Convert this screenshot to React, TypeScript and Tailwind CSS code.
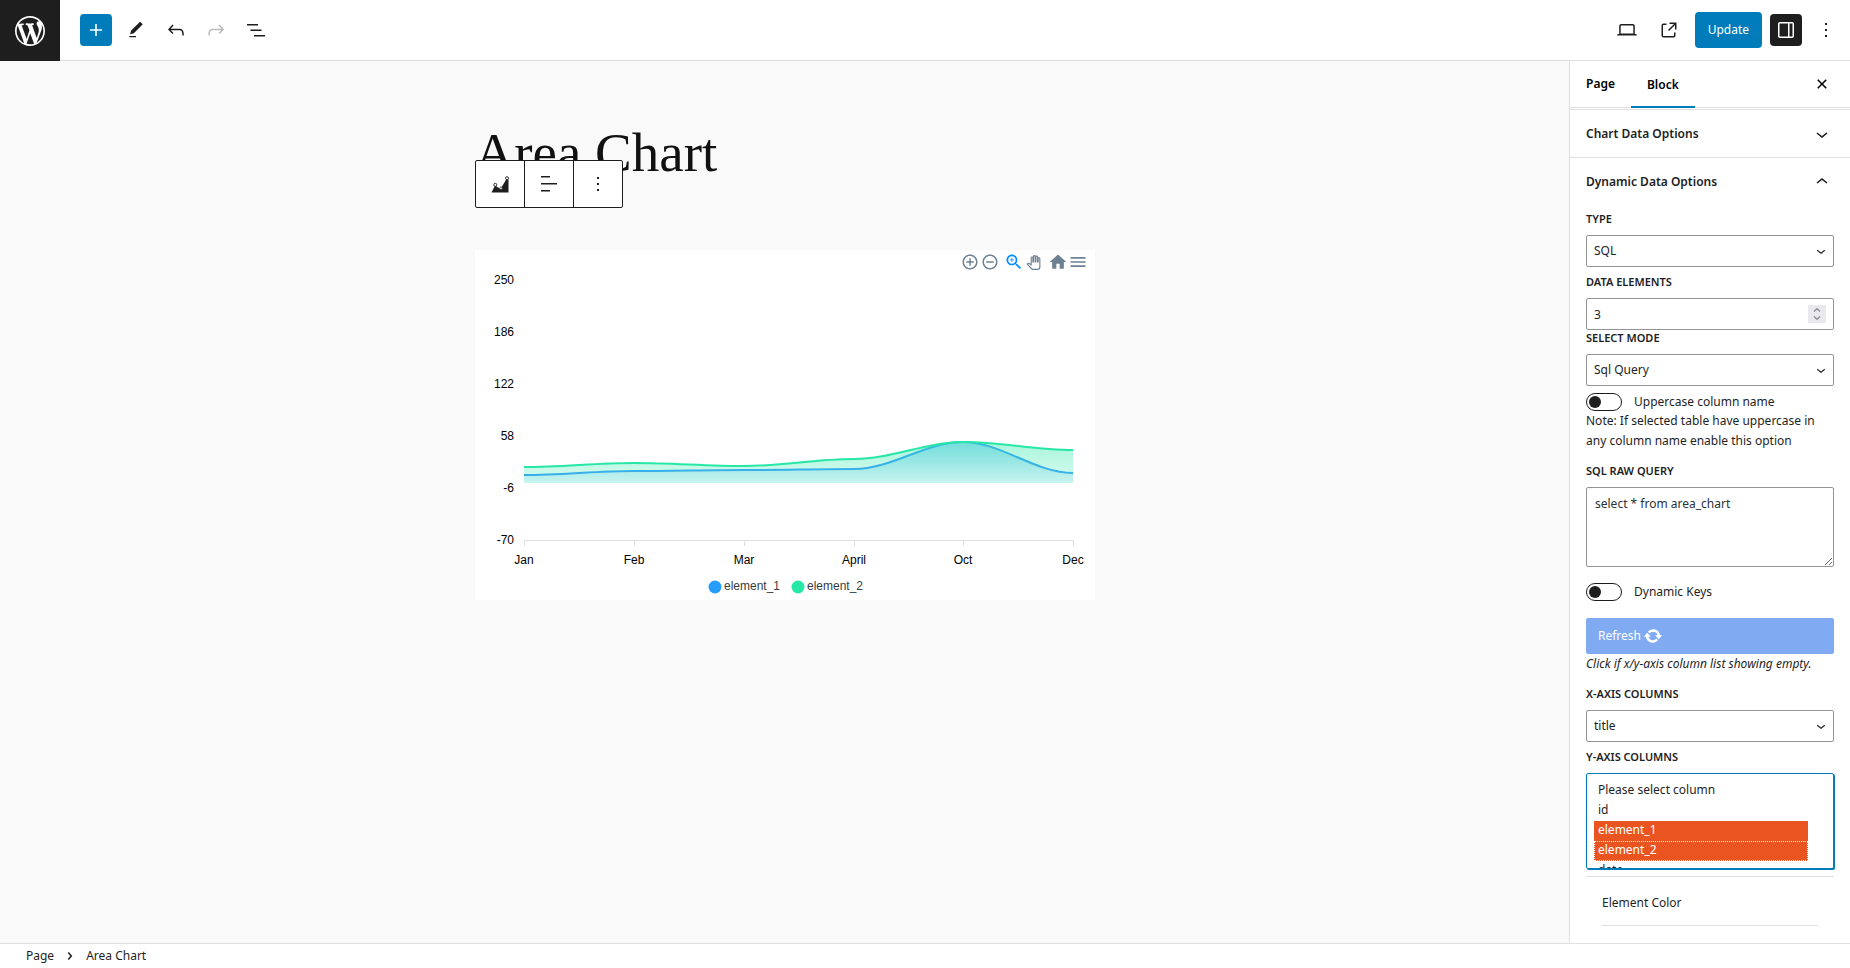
import type { ReactNode, SelectHTMLAttributes } from 'react'

const paths = {
  wordpress:
    'M20 10c0-5.51-4.49-10-10-10C4.48 0 0 4.49 0 10c0 5.52 4.48 10 10 10 5.51 0 10-4.48 10-10zM7.78 15.37L4.37 6.22c.55-.02 1.17-.08 1.17-.08.5-.06.44-1.13-.06-1.11 0 0-1.45.11-2.37.11-.18 0-.37 0-.58-.01C4.12 2.69 6.87 1.11 10 1.11c2.33 0 4.45.87 6.05 2.34-.68-.11-1.65.39-1.65 1.58 0 .74.45 1.36.9 2.1.35.61.55 1.36.55 2.46 0 1.49-1.4 5-1.4 5l-3.03-8.37c.54-.02.82-.17.82-.17.5-.05.44-1.25-.06-1.22 0 0-1.44.12-2.38.12-.87 0-2.33-.12-2.33-.12-.5-.03-.56 1.2-.06 1.22l.92.08 1.26 3.41zM17.41 10c.24-.64.74-1.87.43-4.25.7 1.29 1.05 2.71 1.05 4.25 0 3.29-1.73 6.24-4.4 7.78.97-2.59 1.94-5.2 2.92-7.78zM6.1 18.09C3.12 16.65 1.11 13.53 1.11 10c0-1.3.23-2.48.72-3.59C3.25 10.3 4.67 14.2 6.1 18.09zm4.03-6.63l2.58 6.98c-.86.29-1.76.45-2.71.45-.79 0-1.57-.11-2.29-.33.81-2.38 1.62-4.74 2.42-7.1z',
  plus: 'M18 11.2h-5.2V6h-1.6v5.2H6v1.6h5.2V18h1.6v-5.2H18z',
  edit: 'M20.1 5.1L16.9 2 6.2 12.7l-1.3 4.4 4.5-1.3L20.1 5.1zM4 20.8h8v-1.5H4v1.5z',
  undo: 'M18.3 11.7c-.6-.6-1.4-.9-2.3-.9H6.7l2.9-3.3-1.1-1-4.5 5L8.5 16l1-1-2.7-2.7H16c.5 0 .9.2 1.3.5 1 1 1 3.4 1 4.5v.3h1.5v-.2c0-1.5 0-4.3-1.5-5.7z',
  redo: 'M15.6 6.5l-1.1 1 2.9 3.3H8c-.9 0-1.7.3-2.3.9-1.4 1.5-1.4 4.2-1.4 5.6v.2h1.5v-.3c0-1.1 0-3.5 1-4.5.3-.3.7-.5 1.3-.5h9.2L14.5 15l1.1 1.1 4.6-4.6-4.6-5z',
  listView: 'M3 6h11v1.5H3V6Zm3.5 5.5h11V13h-11v-1.5ZM21 17H10v1.5h11V17Z',
  desktop:
    'M20.5 16h-.7V8c0-1.1-.9-2-2-2H6.2c-1.1 0-2 .9-2 2v8h-.7c-.8 0-1.5.7-1.5 1.5h20c0-.8-.7-1.5-1.5-1.5zM5.7 8c0-.3.2-.5.5-.5h11.6c.3 0 .5.2.5.5v7.6H5.7V8z',
  external:
    'M19.5 4.5h-7V6h4.44l-5.97 5.97 1.06 1.06L18 7.06v4.44h1.5v-7Zm-13 1a2 2 0 0 0-2 2v10a2 2 0 0 0 2 2h10a2 2 0 0 0 2-2v-3H17v3a.5.5 0 0 1-.5.5h-10a.5.5 0 0 1-.5-.5v-10a.5.5 0 0 1 .5-.5h3V5.5h-3Z',
  drawer:
    'M18 4H6c-1.1 0-2 .9-2 2v12c0 1.1.9 2 2 2h12c1.1 0 2-.9 2-2V6c0-1.1-.9-2-2-2zm-4 14.5H6c-.3 0-.5-.2-.5-.5V6c0-.3.2-.5.5-.5h8v13zm4.5-.5c0 .3-.2.5-.5.5h-2.5v-13H18c.3 0 .5.2.5.5v12z',
  more: 'M13 19h-2v-2h2v2zm0-6h-2v-2h2v2zm0-6h-2V5h2v2z',
  close:
    'M12 13.06l3.712 3.713 1.061-1.06L13.061 12l3.712-3.712-1.06-1.06L12 10.938 8.288 7.227l-1.061 1.06L10.939 12l-3.712 3.712 1.06 1.061L12 13.061z',
  chevronDown: 'M17.5 11.6L12 16l-5.5-4.4.9-1.2L12 14l4.5-3.6 1 1.2z',
  chevronUp: 'M6.5 12.4L12 8l5.5 4.4-.9 1.2L12 10l-4.5 3.6-1-1.2z',
  chevronRight:
    'M10.86 8.04l3.42 3.99-3.42 3.99-1.14-.98 2.58-3.01-2.58-3.01 1.14-.98z',
  alignLeft: 'M13 5.5H4V4h9v1.5Zm7 7H4V11h16v1.5Zm-7 7H4V18h9v1.5Z',
  update:
    'M10.2 3.28c3.53 0 6.43 2.61 6.92 6h2.08l-3.5 4-3.5-4h2.32c-.45-1.97-2.21-3.45-4.32-3.45-1.45 0-2.73.71-3.54 1.78L4.95 5.66C6.23 4.2 8.11 3.28 10.2 3.28zm-.4 13.44c-3.52 0-6.43-2.61-6.92-6H.8l3.5-4c1.17 1.33 2.33 2.67 3.5 4H5.48c.45 1.97 2.21 3.45 4.32 3.45 1.45 0 2.73-.71 3.54-1.78l1.71 1.95c-1.28 1.46-3.15 2.38-5.25 2.38z',
  zoomIn:
    'M13 7h-2v4H7v2h4v4h2v-4h4v-2h-4V7zm-1-5C6.48 2 2 6.48 2 12s4.48 10 10 10 10-4.48 10-10S17.52 2 12 2zm0 18c-4.41 0-8-3.59-8-8s3.59-8 8-8 8 3.59 8 8-3.59 8-8 8z',
  zoomOut:
    'M7 11v2h10v-2H7zm5-9C6.48 2 2 6.48 2 12s4.48 10 10 10 10-4.48 10-10S17.52 2 12 2zm0 18c-4.41 0-8-3.59-8-8s3.59-8 8-8 8 3.59 8 8-3.59 8-8 8z',
  zoom: 'M15.5 14h-.79l-.28-.27C15.41 12.59 16 11.11 16 9.5 16 5.91 13.09 3 9.5 3S3 5.91 3 9.5 5.91 16 9.5 16c1.61 0 3.09-.59 4.23-1.57l.27.28v.79l5 4.99L20.49 19l-4.99-5zm-6 0C7.01 14 5 11.99 5 9.5S7.01 5 9.5 5 14 7.01 14 9.5 11.99 14 9.5 14zM12 10h-2v2H9v-2H7V9h2V7h1v2h2v1z',
  home: 'M10 20v-6h4v6h5v-8h3L12 3 2 12h3v8z',
  menu: 'M3 18h18v-2H3v2zm0-5h18v-2H3v2zm0-7v2h18V6H3z',
}

function Icon({ name, box = '0 0 24 24', className = 'w-6 h-6' }: { name: keyof typeof paths; box?: string; className?: string }) {
  return (
    <svg viewBox={box} className={`${className} shrink-0 fill-current`} aria-hidden="true">
      <path d={paths[name]} />
    </svg>
  )
}

function IconButton({ label, className = '', children }: { label: string; className?: string; children: ReactNode }) {
  return (
    <button aria-label={label} className={`flex items-center justify-center h-8 rounded-sm ${className}`}>
      {children}
    </button>
  )
}

// Chart data, already in the 620x350 drawing space
const ticksX = [49, 159, 269, 379, 488, 598]
const months = ['Jan', 'Feb', 'Mar', 'April', 'Oct', 'Dec']
const ticksY = [250, 186, 122, 58, -6, -70]
const element1 = [225, 221, 220, 219, 192, 223]
const element2 = [217, 213, 216, 209, 192, 200]
const baseY = 233

function smoothLine(ys: number[]) {
  return ys.reduce((d, y, i) => {
    if (i === 0) return `M ${ticksX[0]} ${y}`
    const x0 = ticksX[i - 1]
    const x1 = ticksX[i]
    const len = (x1 - x0) * 0.35
    return `${d} C ${x0 + len} ${ys[i - 1]} ${x1 - len} ${y} ${x1} ${y}`
  }, '')
}

function smoothArea(ys: number[]) {
  return `${smoothLine(ys)} L ${ticksX[5]} ${baseY} L ${ticksX[0]} ${baseY} Z`
}

function AreaChart() {
  return (
    <svg viewBox="0 0 620 350" className="block w-full font-['Liberation_Sans',sans-serif] text-[12px]">
      <defs>
        <linearGradient id="blueFill" x1="0" y1="0" x2="0" y2="1">
          <stop offset="0" stopColor="#008ffb" stopOpacity="0.34" />
          <stop offset="1" stopColor="#008ffb" stopOpacity="0.07" />
        </linearGradient>
        <linearGradient id="greenFill" x1="0" y1="0" x2="0" y2="1">
          <stop offset="0" stopColor="#26e7a6" stopOpacity="0.4" />
          <stop offset="1" stopColor="#26e7a6" stopOpacity="0.18" />
        </linearGradient>
      </defs>

      {ticksY.map((value, i) => (
        <text key={value} x="39" y={34 + i * 52} textAnchor="end" fill="#000">{value}</text>
      ))}

      <path d={smoothArea(element1)} fill="url(#blueFill)" />
      <path d={smoothLine(element1)} fill="none" stroke="#3d9eff" strokeWidth="2" />
      <path d={smoothArea(element2)} fill="url(#greenFill)" />
      <path d={smoothLine(element2)} fill="none" stroke="#26e7a6" strokeWidth="2" />

      <path d="M49 290.5H598" stroke="#e0e0e0" />
      {months.map((month, i) => (
        <g key={month}>
          <path d={`M${ticksX[i] + 0.5} 290v6`} stroke="#e0e0e0" />
          <text x={ticksX[i]} y="314" textAnchor="middle" fill="#000">{month}</text>
        </g>
      ))}

      <circle cx="240" cy="337" r="6.5" fill="#259efb" />
      <text x="249" y="340" fill="#373d3f">element_1</text>
      <circle cx="323" cy="337" r="6.5" fill="#26e7a6" />
      <text x="332" y="340" fill="#373d3f">element_2</text>
    </svg>
  )
}

function ChartTools() {
  return (
    <div className="absolute top-0 right-[7px] h-6 flex items-center text-[#6e8192]">
      <button aria-label="Zoom in" className="w-5 flex justify-center"><Icon name="zoomIn" className="w-[18px] h-[18px]" /></button>
      <button aria-label="Zoom out" className="w-5 flex justify-center"><Icon name="zoomOut" className="w-[18px] h-[18px]" /></button>
      <button aria-label="Selection zoom" className="ml-1 w-5 flex justify-center text-[#008ffb]"><Icon name="zoom" className="w-5 h-5" /></button>
      <button aria-label="Pan" className="w-5 flex justify-center">
        <svg viewBox="-1 -1 26 26" className="w-[15px] h-[15px]" fill="#fff" stroke="#6e8192" strokeWidth="2">
          <path d="M23 5.5V20c0 2.2-1.8 4-4 4h-7.3c-1.08 0-2.1-.43-2.85-1.19L1 14.83s1.26-1.23 1.3-1.25c.22-.19.49-.29.79-.29.22 0 .42.06.6.16.04.01 4.31 2.46 4.31 2.46V4c0-.83.67-1.5 1.5-1.5S11 3.17 11 4v7h1V1.5c0-.83.67-1.5 1.5-1.5S15 .67 15 1.5V11h1V2.5c0-.83.67-1.5 1.5-1.5s1.5.67 1.5 1.5V11h1V5.5c0-.83.67-1.5 1.5-1.5s1.5.67 1.5 1.5z" />
        </svg>
      </button>
      <button aria-label="Reset zoom" className="ml-1 w-5 flex justify-center"><Icon name="home" className="w-5 h-5" /></button>
      <button aria-label="Menu" className="w-5 flex justify-center"><Icon name="menu" className="w-5 h-5" /></button>
    </div>
  )
}

function FieldLabel({ htmlFor, className = '', children }: { htmlFor: string; className?: string; children: ReactNode }) {
  return (
    <label htmlFor={htmlFor} className={`block text-[11px] leading-4 mb-2 font-semibold uppercase ${className}`}>
      {children}
    </label>
  )
}

function SelectBox({ children, ...props }: SelectHTMLAttributes<HTMLSelectElement>) {
  return (
    <div className="relative">
      <select {...props} className="block w-full h-8 pl-[7px] pr-8 appearance-none bg-white border border-[#949494] rounded-xs">
        {children}
      </select>
      <Icon name="chevronDown" className="absolute right-1 top-[7px] w-[18px] h-[18px] pointer-events-none" />
    </div>
  )
}

function Toggle({ label, className = '' }: { label: string; className?: string }) {
  return (
    <label className={`flex items-center gap-3 h-[18px] ${className}`}>
      <input
        type="checkbox"
        className="appearance-none shrink-0 w-9 h-[18px] rounded-full border border-[#1e1e1e] bg-white before:block before:w-3 before:h-3 before:mt-0.5 before:ml-0.5 before:rounded-full before:bg-[#1e1e1e]"
      />
      {label}
    </label>
  )
}

function TopBar() {
  return (
    <header className="flex items-center justify-between h-[61px] shrink-0 bg-white border-b border-[#e0e0e0]">
      <div className="flex items-center gap-2">
        <a href="#" aria-label="View pages" className="flex items-center justify-center w-[60px] h-[61px] mr-3 -mb-px bg-[#1e1e1e] text-white">
          <Icon name="wordpress" box="-2 -2 24 24" className="w-9 h-9" />
        </a>
        <IconButton label="Add block" className="w-8 bg-[#007cba] text-white"><Icon name="plus" /></IconButton>
        <IconButton label="Tools" className="w-8"><Icon name="edit" className="w-5 h-5" /></IconButton>
        <IconButton label="Undo" className="w-8"><Icon name="undo" /></IconButton>
        <IconButton label="Redo" className="w-8 text-[#bbb]"><Icon name="redo" /></IconButton>
        <IconButton label="List view" className="w-8"><Icon name="listView" /></IconButton>
      </div>
      <div className="flex items-center gap-2 pr-2">
        <div className="flex gap-1.5">
          <IconButton label="Preview" className="w-9"><Icon name="desktop" /></IconButton>
          <IconButton label="View page" className="w-9"><Icon name="external" /></IconButton>
        </div>
        <button className="h-9 px-[13px] rounded-sm bg-[#007cba] text-white">Update</button>
        <IconButton label="Settings" className="w-8 bg-[#1e1e1e] text-white"><Icon name="drawer" /></IconButton>
        <IconButton label="Options" className="w-8"><Icon name="more" /></IconButton>
      </div>
    </header>
  )
}

function Canvas() {
  return (
    <main className="flex-1 min-w-0 bg-[#f9f9f9] overflow-hidden">
      <div className="relative max-w-[620px] mx-auto pt-[60px]">
        <h1 className="font-['Liberation_Serif',serif] text-[55px] leading-16 text-[#111]">Area Chart</h1>

        {/* Block toolbar floats over the title */}
        <div className="absolute left-0 top-[99px] h-12 flex bg-white border border-[#1e1e1e] rounded-xs divide-x divide-[#1e1e1e]">
          <button aria-label="Area chart" className="w-[49px] flex items-center justify-center">
            <svg viewBox="0 0 18 17" className="w-[18px] h-[17px]" fill="none">
              <path d="M0.5 16.5L4 9.5L9.5 13L15.5 3L17.5 3.5V16.5Z" fill="#1e1e1e" />
              <circle cx="4.3" cy="8.8" r="1.5" fill="#fff" stroke="#1e1e1e" strokeWidth="0.9" />
              <circle cx="10" cy="12.3" r="1.3" fill="#fff" stroke="#1e1e1e" strokeWidth="0.7" />
              <circle cx="16" cy="2.2" r="1.5" fill="#fff" stroke="#1e1e1e" strokeWidth="0.9" />
            </svg>
          </button>
          <button aria-label="Align" className="w-[49px] flex items-center justify-center"><Icon name="alignLeft" /></button>
          <button aria-label="Options" className="w-12 flex items-center justify-center"><Icon name="more" /></button>
        </div>

        <div className="relative mt-[65px] bg-white">
          <AreaChart />
          <ChartTools />
        </div>
      </div>
    </main>
  )
}

function Sidebar() {
  return (
    <aside className="w-[281px] shrink-0 bg-white border-l border-[#e0e0e0] overflow-hidden">
      <div className="flex items-stretch h-[47px] border-b border-[#e0e0e0] font-semibold text-black">
        <button className="px-4">Page</button>
        <button className="px-4 -mb-px border-b-2 border-[#007cba] pt-0.5">Block</button>
        <IconButton label="Close settings" className="w-6 ml-auto mr-4 my-auto"><Icon name="close" /></IconButton>
      </div>

      <button className="flex items-center justify-between w-full h-[49px] mt-px px-4 border-y border-[#e0e0e0] font-semibold">
        Chart Data Options
        <Icon name="chevronDown" />
      </button>
      <button className="flex items-center justify-between w-full h-12 px-4 font-semibold">
        Dynamic Data Options
        <Icon name="chevronUp" />
      </button>

      <div className="px-4 pt-[5px]">
        <FieldLabel htmlFor="type">Type</FieldLabel>
        <SelectBox id="type"><option>SQL</option></SelectBox>

        <FieldLabel htmlFor="count" className="mt-[7px]">Data Elements</FieldLabel>
        <div className="relative">
          <input
            id="count"
            type="number"
            defaultValue={3}
            className="block w-full h-8 px-[7px] border border-[#949494] rounded-xs [appearance:textfield] [&::-webkit-inner-spin-button]:appearance-none"
          />
          <svg viewBox="0 0 18 18" className="absolute right-2 top-[7px] w-[18px] h-[18px] bg-[#e9e9ed]" fill="none" stroke="#8f8f9d" strokeWidth="1.5">
            <path d="M6 6.5L9 3.8L12 6.5M6 11.5L9 14.2L12 11.5" />
          </svg>
        </div>

        <FieldLabel htmlFor="mode">Select Mode</FieldLabel>
        <SelectBox id="mode"><option>Sql Query</option></SelectBox>

        <Toggle label="Uppercase column name" className="mt-[7px]" />
        <p>Note: If selected table have uppercase in any column name enable this option</p>

        <FieldLabel htmlFor="query" className="mt-3">SQL Raw Query</FieldLabel>
        <textarea
          id="query"
          defaultValue="select * from area_chart"
          className="block w-full h-20 px-2 py-1.5 border border-[#949494] rounded-xs resize-y text-[#2c3338]"
        />

        <Toggle label="Dynamic Keys" className="mt-4" />

        <button className="flex items-center w-full h-9 mt-[17px] px-3 gap-0.5 rounded-xs bg-[#80abf3] text-white">
          Refresh
          <Icon name="update" box="0 0 20 20" className="w-5 h-5" />
        </button>
        <p className="italic whitespace-nowrap">Click if x/y-axis column list showing empty.</p>

        <FieldLabel htmlFor="x-axis" className="mt-3">X-Axis Columns</FieldLabel>
        <SelectBox id="x-axis"><option>title</option></SelectBox>

        <FieldLabel htmlFor="y-axis" className="mt-[7px]">Y-Axis Columns</FieldLabel>
        <select
          id="y-axis"
          multiple
          defaultValue={['element_1', 'element_2']}
          className="block w-full h-24 pl-[7px] pr-[25px] pt-[7px] bg-white border border-[#007cba] rounded-xs shadow-[1px_1px_0_0_#007cba] overflow-hidden [scrollbar-width:none] [&>option]:h-5 [&>option]:px-1 [&>option]:py-0 [&>option]:checked:bg-[linear-gradient(#e95420,#e95420)] [&>option]:checked:[-webkit-text-fill-color:white]"
        >
          <option>Please select column</option>
          <option>id</option>
          <option>element_1</option>
          <option className="outline-1 outline-dotted outline-white -outline-offset-1">element_2</option>
          <option>date</option>
        </select>

        <div className="mt-[7px] border-t border-[#e0e0e0] px-4">
          <div className="flex items-center h-[49px] pt-1 border-b border-[#e0e0e0]">Element Color</div>
        </div>
      </div>
    </aside>
  )
}

export default function App() {
  return (
    <div className="flex flex-col h-screen overflow-hidden bg-white font-['Noto_Sans',sans-serif] text-[12px] leading-5 text-[#1e1e1e]">
      <TopBar />
      <div className="flex flex-1 min-h-0">
        <Canvas />
        <Sidebar />
      </div>
      <footer className="flex items-center h-[25px] shrink-0 pl-[26px] border-t border-[#e0e0e0] bg-white">
        <a href="#">Page</a>
        <Icon name="chevronRight" className="w-6 h-6 mx-1" />
        <span>Area Chart</span>
      </footer>
    </div>
  )
}
